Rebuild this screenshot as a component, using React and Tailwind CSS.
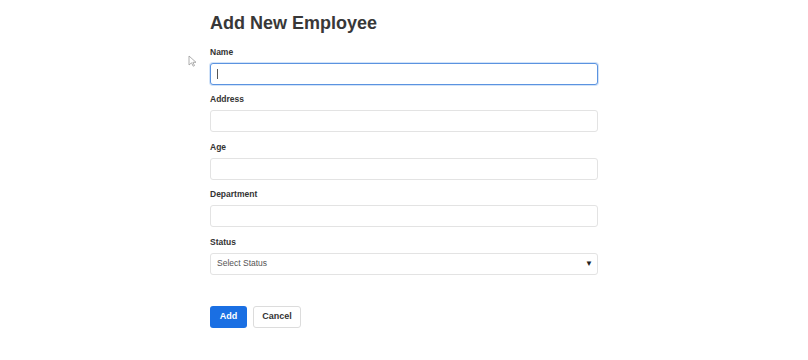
import React from "react";

function Field({ label, children }) {
  return (
    <div className="flex flex-col">
      <label className="text-[8.5px] font-bold text-[#333] leading-[11px] mb-[5px]">{label}</label>
      {children}
    </div>
  );
}

const inputCls =
  "h-[22px] w-full rounded-[3px] border border-[#e3e3e3] bg-white px-[6px] text-[9px] outline-none";

export default function App() {
  return (
    <div className="relative min-h-[360px] w-[808px] bg-white font-['Liberation_Sans',Arial,sans-serif]">
      <svg className="absolute left-[188px] top-[55px]" width="9" height="12" viewBox="0 0 9 12">
        <path d="M1 1 L1 10 L3.5 7.8 L5.2 11.2 L6.5 10.6 L4.9 7.3 L8 7.3 Z" fill="#fff" stroke="#999" strokeWidth="0.8" />
      </svg>
      <div className="mx-auto w-[388px] pt-[12px]">
        <h1 className="text-[18px] font-bold leading-[22px] text-[#383838] mb-[12.5px]">Add New Employee</h1>
        <div className="flex flex-col gap-[9.5px]">
          <Field label="Name">
            <div className="relative">
              <div className="h-[22px] w-full rounded-[3px] border border-[#5b93e0] bg-white shadow-[0_0_0_1px_rgba(74,144,226,0.25)]" />
              <span className="absolute left-[7px] top-[6px] h-[10px] w-px bg-[#555]" />
            </div>
          </Field>
          <Field label="Address">
            <input className={inputCls} />
          </Field>
          <Field label="Age">
            <input className={inputCls} />
          </Field>
          <Field label="Department">
            <input className={inputCls} />
          </Field>
          <Field label="Status">
            <div className="flex h-[22px] w-full items-center justify-between rounded-[3px] border border-[#e3e3e3] bg-white pl-[6px] pr-[4px]">
              <span className="text-[8.5px] text-[#555]">Select Status</span>
              <span className="text-[8px] text-[#222]">▼</span>
            </div>
          </Field>
        </div>
        <div className="mt-[31px] flex gap-[6px]">
          <button className="h-[22px] w-[37px] rounded-[3px] bg-[#1a6fe3] text-[9px] font-bold text-white">Add</button>
          <button className="h-[22px] w-[48px] rounded-[3px] border border-[#dcdcdc] bg-white text-[9px] font-bold text-[#333]">Cancel</button>
        </div>
      </div>
    </div>
  );
}
